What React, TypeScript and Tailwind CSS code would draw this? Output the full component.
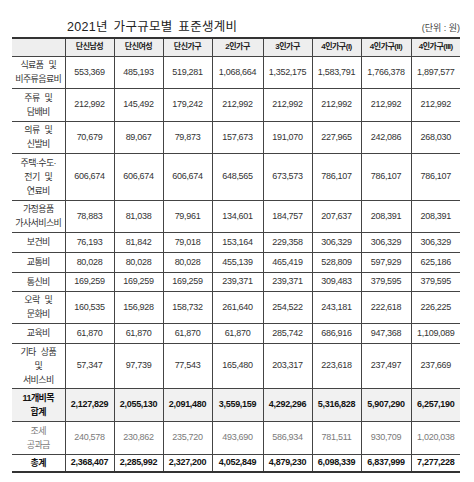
import React from 'react';

const cols = ['단신남성', '단신여성', '단신가구', '2인가구', '3인가구', '4인가구(I)', '4인가구(II)', '4인가구(III)'];
const widths = [53, 49, 49, 49, 51, 49, 49, 50, 49];

type Row = { label: string[]; values: string[]; h: number; kind?: 'sum' | 'tax' | 'total' };

const rows: Row[] = [
  { label: ['식료품 및', '비주류음료비'], h: 32, values: ['553,369', '485,193', '519,281', '1,068,664', '1,352,175', '1,583,791', '1,766,378', '1,897,577'] },
  { label: ['주류 및', '담배비'], h: 33, values: ['212,992', '145,492', '179,242', '212,992', '212,992', '212,992', '212,992', '212,992'] },
  { label: ['의류 및', '신발비'], h: 32, values: ['70,679', '89,067', '79,873', '157,673', '191,070', '227,965', '242,086', '268,030'] },
  { label: ['주택·수도·', '전기 및', '연료비'], h: 47, values: ['606,674', '606,674', '606,674', '648,565', '673,573', '786,107', '786,107', '786,107'] },
  { label: ['가정용품', '가사서비스비'], h: 32, values: ['78,883', '81,038', '79,961', '134,601', '184,757', '207,637', '208,391', '208,391'] },
  { label: ['보건비'], h: 20, values: ['76,193', '81,842', '79,018', '153,164', '229,358', '306,329', '306,329', '306,329'] },
  { label: ['교통비'], h: 20, values: ['80,028', '80,028', '80,028', '455,139', '465,419', '528,809', '597,929', '625,186'] },
  { label: ['통신비'], h: 19, values: ['169,259', '169,259', '169,259', '239,371', '239,371', '309,483', '379,595', '379,595'] },
  { label: ['오락 및', '문화비'], h: 32, values: ['160,535', '156,928', '158,732', '261,640', '254,522', '243,181', '222,618', '226,225'] },
  { label: ['교육비'], h: 20, values: ['61,870', '61,870', '61,870', '61,870', '285,742', '686,916', '947,368', '1,109,089'] },
  { label: ['기타 상품', '및', '서비스비'], h: 45, values: ['57,347', '97,739', '77,543', '165,480', '203,317', '223,618', '237,497', '237,669'] },
  { label: ['11개비목', '합계'], h: 33, kind: 'sum', values: ['2,127,829', '2,055,130', '2,091,480', '3,559,159', '4,292,296', '5,316,828', '5,907,290', '6,257,190'] },
  { label: ['조세', '공과금'], h: 33, kind: 'tax', values: ['240,578', '230,862', '235,720', '493,690', '586,934', '781,511', '930,709', '1,020,038'] },
  { label: ['총계'], h: 18, kind: 'total', values: ['2,368,407', '2,285,992', '2,327,200', '4,052,849', '4,879,230', '6,098,339', '6,837,999', '7,277,228'] },
];

const font = { fontFamily: '"Liberation Sans", "Noto Sans CJK KR", sans-serif' };

export default function App() {
  return (
    <div className="w-[474px] h-[482px] bg-white text-[#333]" style={font}>
      {/* Title line */}
      <div className="flex items-end h-[33px] pl-[67px] pr-[14px]">
        <h1 className="text-[12.5px] text-[#222] leading-none tracking-[0.3px] [word-spacing:2px]">2021년 가구규모별 표준생계비</h1>
        <span className="ml-auto text-[9px] text-[#444] leading-none">(단위 : 원)</span>
      </div>

      <table className="ml-[12px] mt-[4px] w-[448px] table-fixed border-collapse border-t-2 border-b-2 border-[#333]">
        <colgroup>
          {widths.map((w, i) => (
            <col key={i} style={{ width: w }} />
          ))}
        </colgroup>
        <thead>
          <tr className="h-[18px] bg-[#eeeeee] border-b border-[#444]">
            <th className="p-0" />
            {cols.map((c) => (
              <th key={c} className="p-0 border-l border-[#444] text-[8px] font-bold text-[#222] tracking-[-0.5px] leading-none">
                {c}
              </th>
            ))}
          </tr>
        </thead>
        <tbody>
          {rows.map((r, i) => {
            const rowCls =
              r.kind === 'sum'
                ? 'bg-[#f1f1f1] text-[#111] font-bold'
                : r.kind === 'tax'
                ? 'text-[#7a7a7a]'
                : r.kind === 'total'
                ? 'text-[#111] font-bold'
                : 'text-[#333]';
            return (
              <tr
                key={i}
                className={`${rowCls} ${i < rows.length - 1 ? 'border-b border-[#444]' : ''}`}
                style={{ height: r.h }}
              >
                <td className="p-0 text-center text-[9px] leading-[14px] tracking-[-0.6px] [word-spacing:3px]">
                  {r.label.map((l, j) => (
                    <div key={j}>{l}</div>
                  ))}
                </td>
                {r.values.map((v, j) => (
                  <td key={j} className="p-0 border-l border-[#444] text-center text-[9px] tracking-[-0.3px] leading-none">
                    {v}
                  </td>
                ))}
              </tr>
            );
          })}
        </tbody>
      </table>
    </div>
  );
}
